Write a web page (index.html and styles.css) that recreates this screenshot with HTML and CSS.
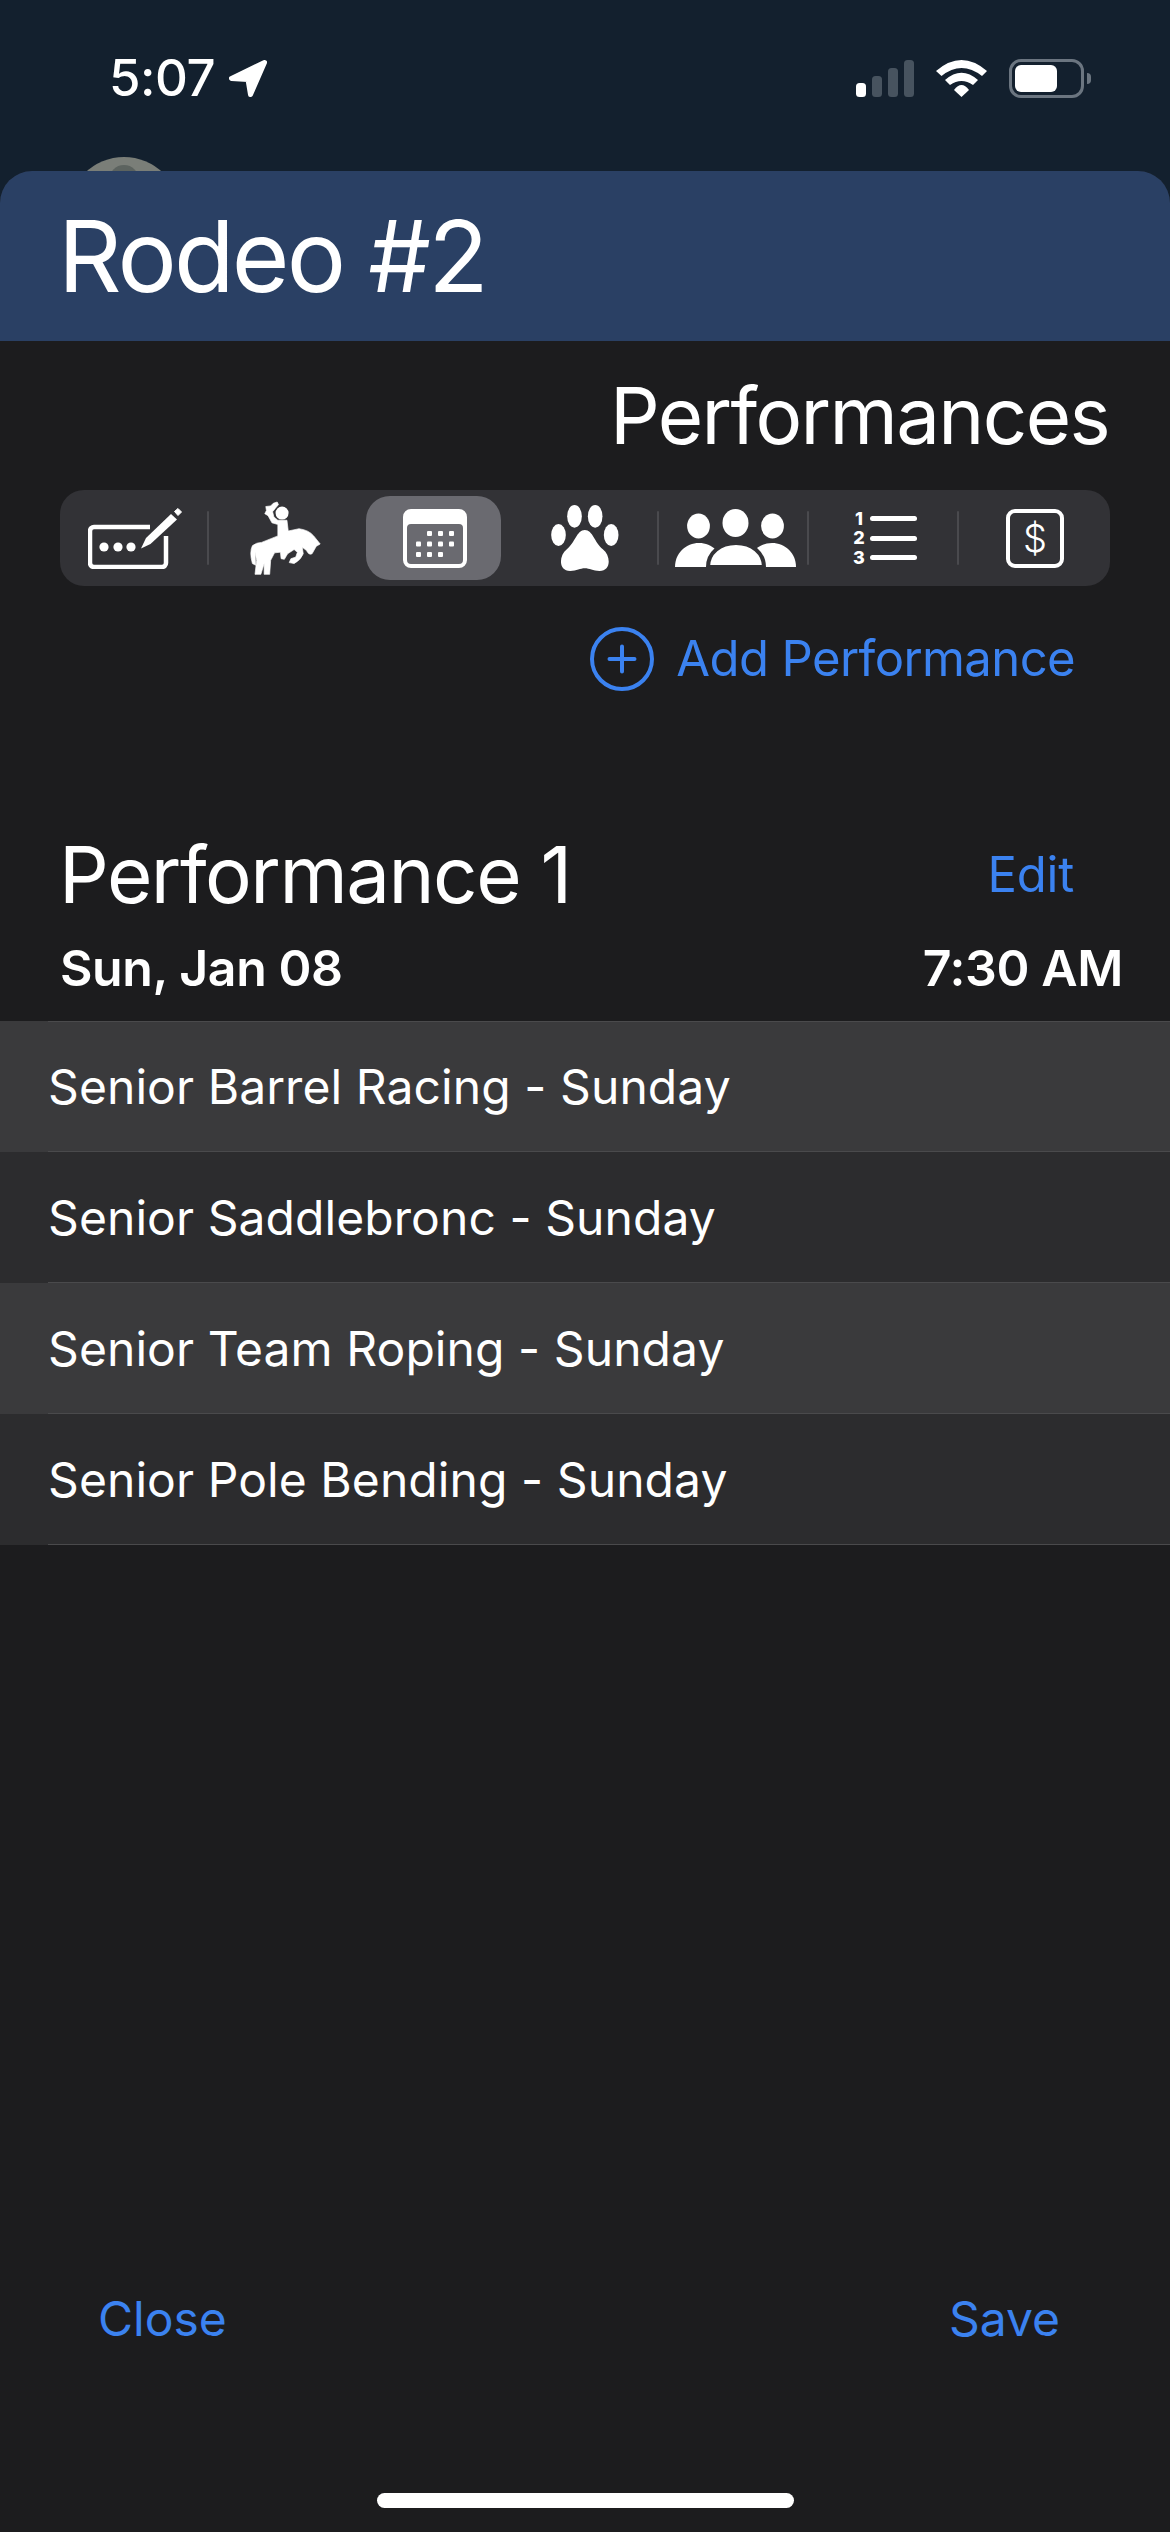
FILE: index.html
```html
<!DOCTYPE html>
<html lang="en">
<head>
<meta charset="utf-8">
<title>Rodeo #2</title>
<link rel="stylesheet" href="styles.css">
</head>
<body>
<div class="screen">
  <div class="status">
    <div class="status-left">
      <span class="clock">5:07</span>
      <svg class="loc" viewBox="0 0 38 37"><path d="M35.500 2.500 2.500 18.500 19 19.500 21.500 34.500Z" fill="#fff" stroke="#fff" stroke-width="5" stroke-linejoin="round"/></svg>
    </div>
    <div class="status-right">
      <svg class="signal" viewBox="0 0 58 37">
        <rect x="0" y="23" width="10" height="14" rx="3.500" fill="#fff"/>
        <rect x="16" y="16" width="10" height="21" rx="3.500" fill="#47535f"/>
        <rect x="32" y="8" width="10" height="29" rx="3.500" fill="#47535f"/>
        <rect x="48" y="0" width="10" height="37" rx="3.500" fill="#47535f"/>
      </svg>
      <svg class="wifi" viewBox="0 0 51 37">
        <path d="M0 11Q25.500-11 51 11L46 16Q25.500 0 5.500 16Z" fill="#fff"/>
        <path d="M9 20Q25.500 5.400 42 20L37 25Q25.500 17 14 25Z" fill="#fff"/>
        <path d="M18 30Q25.500 20 33 30L25.500 37Z" fill="#fff"/>
      </svg>
      <div class="battery"><div class="battery-fill"></div></div>
      <div class="battery-nub"></div>
    </div>
    <div class="avatar"><div class="avatar-glyph"></div></div>
  </div>

  <main class="sheet">
    <header class="sheet-head"><h1 class="title">Rodeo #2</h1></header>
    <h2 class="section">Performances</h2>

    <nav class="tabs">
      <div class="tab sep">
        <svg class="ic-pencil" viewBox="0 0 94 61">
          <path d="M62 19H6a4 4 0 0 0-4 4V55a4 4 0 0 0 4 4H74a4 4 0 0 0 4-4V28" fill="none" stroke="#fff" stroke-width="4.500"/>
          <circle cx="16" cy="39" r="4.600" fill="#fff"/><circle cx="30" cy="39" r="4.600" fill="#fff"/><circle cx="43" cy="39" r="4.600" fill="#fff"/>
          <path d="M53 40.500 58 30 83 6 89 11.500 62.500 36Z" fill="#fff"/>
          <path d="M86.500 3.500 90 0.500 93.500 4 90 7.500Z" fill="#fff" stroke="#fff" stroke-width="1" stroke-linejoin="round"/>
        </svg>
      </div>
      <div class="tab">
        <svg class="ic-rider" viewBox="52 33 220 227">
          <circle cx="153" cy="70" r="20" fill="#fff"/>
          <path d="M140 105 122 100 110 78 100 72 105 62 103 50 118 48 126 40 138 36 142 44 132 56 124 66 128 82 140 92H168L172 125 205 118Q235 122 250 140L270 165 258 172 245 195Q235 200 228 185L215 175 218 195Q210 215 190 225L175 222 180 210 195 205 200 190 190 182 170 195 160 212 150 210 148 190 130 192 118 215 115 258H98V225L88 258H70L75 215 70 190 72 230 62 225Q52 190 62 170 75 160 90 160L140 140Z" fill="#fff" stroke="#fff" stroke-width="2" stroke-linejoin="round"/>
        </svg>
      </div>
      <div class="tab tab-on">
        <svg class="ic-cal" viewBox="0 0 64 59">
          <path d="M8 0H56a8 8 0 0 1 8 8V51a8 8 0 0 1-8 8H8a8 8 0 0 1-8-8V8a8 8 0 0 1 8-8ZM8 15a4 4 0 0 0-4 4V51a4 4 0 0 0 4 4H56a4 4 0 0 0 4-4V19a4 4 0 0 0-4-4Z" fill="#fff" fill-rule="evenodd"/>
          <g fill="#fff">
            <rect x="24" y="22" width="5" height="5" rx="1"/><rect x="35" y="22" width="5" height="5" rx="1"/><rect x="46" y="22" width="5" height="5" rx="1"/>
            <rect x="13" y="32.500" width="5" height="5" rx="1"/><rect x="24" y="32.500" width="5" height="5" rx="1"/><rect x="35" y="32.500" width="5" height="5" rx="1"/><rect x="46" y="32.500" width="5" height="5" rx="1"/>
            <rect x="13" y="43" width="5" height="5" rx="1"/><rect x="24" y="43" width="5" height="5" rx="1"/><rect x="35" y="43" width="5" height="5" rx="1"/>
          </g>
        </svg>
      </div>
      <div class="tab sep">
        <svg class="ic-paw" viewBox="60 47 203 198">
          <g fill="#fff">
            <ellipse cx="82" cy="137" rx="22" ry="33"/><ellipse cx="130" cy="81" rx="22" ry="34"/><ellipse cx="192" cy="81" rx="22" ry="34"/><ellipse cx="240" cy="137" rx="22" ry="33"/>
            <path d="M161 122C185 122 190 160 215 180 240 200 240 245 205 245 185 245 175 237 161 237 147 237 137 245 117 245 82 245 82 200 107 180 132 160 137 122 161 122Z"/>
          </g>
        </svg>
      </div>
      <div class="tab sep">
        <svg class="ic-people" viewBox="73 39 121 58">
          <g fill="#fff">
            <ellipse cx="96.500" cy="56" rx="11.400" ry="12.500"/><ellipse cx="133.500" cy="53" rx="13" ry="14"/><ellipse cx="170.500" cy="56" rx="11.400" ry="12.500"/>
            <path d="M73 97C73 83 84 73 97 73S121 83 121 97Z"/><path d="M146 97C146 83 157 73 170 73S194 83 194 97Z"/>
            <path d="M106 97C106 83 118 73 134 73S162 83 162 97Z" stroke="#323236" stroke-width="4"/>
          </g>
          <rect x="100" y="97" width="70" height="4" fill="#323236"/>
        </svg>
      </div>
      <div class="tab sep">
        <div class="ic-list">
          <div class="ol-row"><span class="ol-num">1</span><span class="ol-line"></span></div>
          <div class="ol-row"><span class="ol-num">2</span><span class="ol-line"></span></div>
          <div class="ol-row"><span class="ol-num">3</span><span class="ol-line"></span></div>
        </div>
      </div>
      <div class="tab"><div class="ic-dollar">$</div></div>
    </nav>

    <div class="add">
      <svg class="add-ic" viewBox="0 0 64 64"><circle cx="32" cy="32" r="30" fill="none" stroke="#3b82f0" stroke-width="4"/><path d="M19.500 32H44.500M32 19.500V44.500" stroke="#3b82f0" stroke-width="4" stroke-linecap="round"/></svg>
      <span class="add-label">Add Performance</span>
    </div>

    <div class="perf-head">
      <span class="perf-name">Performance 1</span>
      <span class="perf-edit">Edit</span>
    </div>
    <div class="perf-when"><span>Sun, Jan 08</span><span>7:30 AM</span></div>

    <ul class="events">
      <li class="event odd"><span class="event-text">Senior Barrel Racing - Sunday</span></li>
      <li class="event"><span class="event-text">Senior Saddlebronc - Sunday</span></li>
      <li class="event odd"><span class="event-text">Senior Team Roping - Sunday</span></li>
      <li class="event"><span class="event-text">Senior Pole Bending - Sunday</span></li>
    </ul>

    <footer class="foot"><span>Close</span><span>Save</span></footer>
    <div class="home"></div>
  </main>
</div>
</body>
</html>
```
FILE: styles.css
```css
* { box-sizing: border-box; }
html, body { margin: 0; padding: 0; }
body { background: #13202e; font-family: Inter, "Liberation Sans", sans-serif; color: #fff; }
.screen { width: 1170px; height: 2532px; display: flex; flex-direction: column; overflow: hidden; }

.status { height: 171px; flex: none; position: relative; display: flex; justify-content: space-between; padding: 58px 79px 0 109px; align-items: flex-start; }
.status-left { display: flex; align-items: center; height: 40px; gap: 14px; }
.clock { font-size: 51px; line-height: 40px; font-weight: 500; letter-spacing: -0.5px; }
.loc { width: 38px; height: 37px; display: block; margin-top: 1px; }
.status-right { display: flex; align-items: center; height: 40px; }
.signal { width: 58px; height: 37px; display: block; }
.wifi { width: 51px; height: 37px; display: block; margin-left: 22px; }
.battery { width: 75px; height: 39px; margin-left: 22px; border: 3px solid #6b7580; border-radius: 12px; padding: 3px; }
.battery-fill { width: 42px; height: 27px; background: #fff; border-radius: 6px; }
.battery-nub { width: 4px; height: 11px; margin-left: 3px; background: #6b7580; border-radius: 0 4px 4px 0; }
.avatar { position: absolute; left: 68px; top: 157px; width: 112px; height: 112px; border-radius: 50%; background: #7a7e78; }
.avatar-glyph { width: 30px; height: 30px; border-radius: 50%; background: #5c635f; margin: 8px auto 0; }

.sheet { flex: 1; position: relative; z-index: 1; background: #1c1c1e; border-radius: 32px 32px 0 0; display: flex; flex-direction: column; overflow: hidden; }
.sheet-head { height: 170px; flex: none; background: #2a4064; padding-left: 58px; display: flex; align-items: center; }
.title { margin: 0; font-size: 99px; line-height: 170px; font-weight: 400; letter-spacing: -2.8px; }
.section { margin: 30px 61px 0 0; height: 90px; text-align: right; font-size: 78px; line-height: 90px; font-weight: 400; letter-spacing: -1.65px; }

.tabs { margin: 29px 60px 0; height: 96px; flex: none; background: #323236; border-radius: 24px; display: grid; grid-template-columns: repeat(7, 150px); }
.tab { position: relative; display: flex; align-items: center; justify-content: center; }
.tab.sep::after { content: ""; position: absolute; right: 1px; top: 21px; height: 54px; width: 2px; background: #4a4a4e; border-radius: 1px; }
.tab-on::before { content: ""; position: absolute; left: 6px; top: 6px; width: 135px; height: 84px; background: #6a6a70; border-radius: 24px; }
.tab svg { display: block; position: relative; }
.ic-pencil { width: 94px; height: 61px; }
.ic-rider { width: 72px; height: 74px; }
.ic-cal { width: 64px; height: 59px; }
.ic-paw { width: 68px; height: 66px; }
.ic-people { width: 121px; height: 58px; }
.ic-list { display: flex; flex-direction: column; gap: 1px; width: 64px; }
.ol-row { display: flex; align-items: center; height: 18.500px; gap: 5px; }
.ol-num { width: 12px; font-size: 18px; line-height: 18px; font-weight: 800; text-align: center; }
.ol-line { flex: 1; height: 5px; border-radius: 3px; background: #fff; }
.ic-dollar { width: 58px; height: 59px; border: 4.500px solid #fff; border-radius: 9px; display: flex; align-items: center; justify-content: center; font-size: 38px; font-weight: 300; line-height: 1; }

.add { margin: 41px 95px 0 0; height: 64px; flex: none; display: flex; justify-content: flex-end; align-items: center; color: #3b82f0; gap: 22px; }
.add-ic { width: 64px; height: 64px; display: block; }
.add-label { font-size: 49px; line-height: 64px; font-weight: 400; letter-spacing: -0.6px; }

.perf-head { margin-top: 139px; height: 90px; flex: none; padding: 0 96px 0 59px; display: flex; justify-content: space-between; align-items: center; }
.perf-name { font-size: 78px; line-height: 90px; font-weight: 400; letter-spacing: -1.5px; }
.perf-edit { font-size: 49px; line-height: 60px; color: #3b82f0; letter-spacing: -0.2px; }
.perf-when { margin-top: 18px; height: 60px; flex: none; padding: 0 47px 0 60px; display: flex; justify-content: space-between; align-items: center; font-size: 50px; line-height: 60px; font-weight: 600; letter-spacing: -0.4px; }

.events { list-style: none; margin: 23px 0 0; padding: 0; }
.event { height: 131px; padding-left: 48px; background: #2c2c2e; }
.event.odd { background: #3a3a3c; }
.event-text { display: flex; height: 131px; align-items: center; font-size: 48px; border-bottom: 1px solid #4a4a4c; letter-spacing: 0.08px; }
.event:first-child .event-text { box-shadow: inset 0 1px #4a4a4c; }

.foot { margin-top: auto; height: 60px; flex: none; padding: 0 110px 0 98px; display: flex; justify-content: space-between; align-items: center; font-size: 48px; line-height: 60px; color: #3b82f0; }
.home { width: 417px; height: 15px; flex: none; margin: 144px auto 24px; background: #fff; border-radius: 8px; }
```
